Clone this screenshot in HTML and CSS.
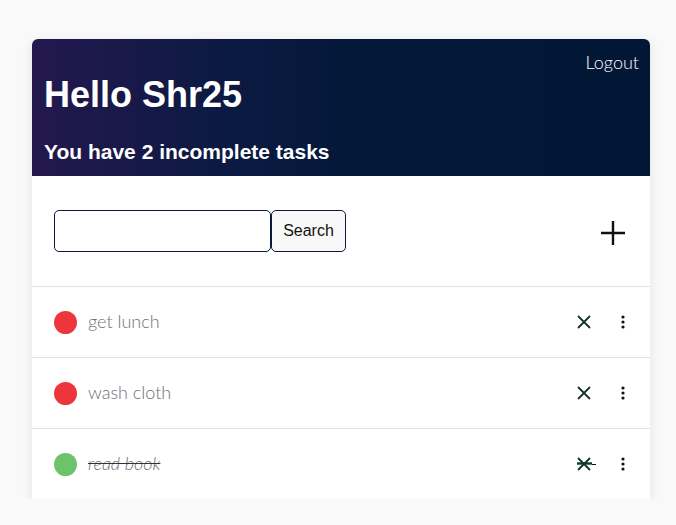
FILE: index.html
```html
<!DOCTYPE html>
<html>
<head>
<meta charset="utf-8">
<link rel="stylesheet" href="styles.css">
</head>
<body>
<div class="card">
  <header class="header">
    <div class="top"><span class="logout">Logout</span></div>
    <h1 class="hello">Hello Shr25</h1>
    <h2 class="sub">You have 2 incomplete tasks</h2>
  </header>
  <section class="toolbar">
    <div class="search">
      <input class="search-input" type="text">
      <button class="search-btn">Search</button>
    </div>
    <svg class="plus" width="26" height="26" viewBox="0 0 26 26"><path d="M13 1V25M1 13H25" stroke="#111" stroke-width="2.4"/></svg>
  </section>
  <ul class="tasks">
    <li class="task">
      <span class="dot red"></span>
      <span class="label">get lunch</span>
      <span class="actions">
        <svg class="x" width="14" height="14" viewBox="0 0 14 14"><path d="M1 1L13 13M13 1L1 13" stroke="#13332a" stroke-width="1.8"/></svg>
        <svg class="kebab" width="4" height="14" viewBox="0 0 4 14"><circle cx="2" cy="2" r="1.6"/><circle cx="2" cy="7" r="1.6"/><circle cx="2" cy="12" r="1.6"/></svg>
      </span>
    </li>
    <li class="task">
      <span class="dot red"></span>
      <span class="label">wash cloth</span>
      <span class="actions">
        <svg class="x" width="14" height="14" viewBox="0 0 14 14"><path d="M1 1L13 13M13 1L1 13" stroke="#13332a" stroke-width="1.8"/></svg>
        <svg class="kebab" width="4" height="14" viewBox="0 0 4 14"><circle cx="2" cy="2" r="1.6"/><circle cx="2" cy="7" r="1.6"/><circle cx="2" cy="12" r="1.6"/></svg>
      </span>
    </li>
    <li class="task">
      <span class="dot green"></span>
      <span class="label done">read book</span>
      <span class="actions">
        <svg class="x" width="20" height="14" viewBox="0 0 20 14"><path d="M1 1L13 13M13 1L1 13" stroke="#13332a" stroke-width="1.8"/><path d="M0 6.5H15" stroke="#0f3a22" stroke-width="2.4"/><path d="M15 7.5H19" stroke="#111" stroke-width="1"/></svg>
        <svg class="kebab" width="4" height="14" viewBox="0 0 4 14"><circle cx="2" cy="2" r="1.6"/><circle cx="2" cy="7" r="1.6"/><circle cx="2" cy="12" r="1.6"/></svg>
      </span>
    </li>
  </ul>
</div>
</body>
</html>
```
FILE: styles.css
```css
* { box-sizing: border-box; }
body {
  margin: 0;
  padding-top: 39px;
  background: #f9f9f9;
  font-family: "Liberation Sans", Arial, sans-serif;
}
.card {
  margin-left: 32px;
  width: 618px;
  background: #fff;
  border-radius: 6px 6px 0 0;
  box-shadow: 0 3px 12px rgba(0, 0, 0, 0.09);
}
.header {
  height: 137px;
  padding: 12px 11px 11px 12px;
  border-radius: 6px 6px 0 0;
  background: linear-gradient(90deg, #24184f 0%, #0c1a43 30%, #04183a 50%, #021735 100%);
  color: #fff;
  display: flex;
  flex-direction: column;
}
.top {
  display: flex;
  justify-content: flex-end;
  height: 24px;
}
.logout {
  font-family: Lato, "Noto Sans", sans-serif;
  font-weight: 300;
  font-size: 18px;
  line-height: 22px;
}
.hello {
  margin: 0;
  font-size: 36px;
  line-height: 40px;
  font-weight: bold;
}
.sub {
  margin: 25px 0 0;
  font-size: 21px;
  line-height: 24px;
  font-weight: bold;
}
.toolbar {
  height: 110px;
  display: flex;
  align-items: center;
  justify-content: space-between;
  padding: 0 24px 0 22px;
}
.search { display: flex; }
.search-input {
  width: 217px;
  height: 42px;
  border: 1px solid #0b1a3a;
  border-radius: 5px;
  background: #fff;
  margin: 0;
}
.search-btn {
  width: 75px;
  height: 42px;
  margin: 0;
  border: 1px solid #0b1a3a;
  border-radius: 5px;
  background: #f8f8f8;
  font-family: "Liberation Sans", Arial, sans-serif;
  font-size: 16px;
  color: #111;
}
.plus { display: block; margin-top: 4px; }
.tasks {
  list-style: none;
  margin: 0;
  padding: 0;
}
.task {
  height: 71px;
  border-top: 1px solid #e1e2e8;
  display: flex;
  align-items: center;
  padding: 0 25px 0 22px;
}
.dot {
  width: 23px;
  height: 23px;
  border-radius: 50%;
  flex: none;
}
.red { background: #ec363b; }
.green { background: #6cc36a; }
.label {
  margin-left: 11px;
  margin-bottom: 3px;
  font-family: Lato, "Noto Sans", sans-serif;
  font-weight: 300;
  font-size: 18px;
  line-height: 24px;
  color: #6e6e77;
  flex: 1;
}
.done {
  font-style: italic;
  text-decoration: line-through;
  text-decoration-color: #333;
}
.actions {
  display: flex;
  align-items: center;
}
.x { display: block; }
.kebab { display: block; fill: #111; margin-left: 30px; }
.task:last-child .kebab { margin-left: 24px; }
```
